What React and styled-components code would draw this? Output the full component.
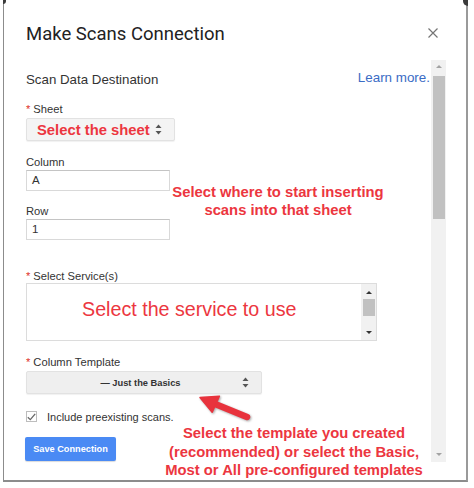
import React from "react";
import styled, { createGlobalStyle } from "styled-components";

const GlobalStyle = createGlobalStyle`
  html, body { margin: 0; padding: 0; background: #fff; }
  body { font-family: "Liberation Sans", Arial, sans-serif; color: #333; }
  * { box-sizing: border-box; }
`;

const RED = "#ec3640";

const Frame = styled.div`
  position: relative;
  margin-left: 3px;
  width: 465px;
  height: 482px;
  border-left: 1px solid #8c8c8c;
  border-right: 2px solid #9a9a9a;
  border-bottom: 2px solid #8c8c8c;
  display: flex;
  flex-direction: column;
  background: #fff;
`;

const Corner = styled.div`
  position: absolute;
  top: 0;
  ${(p) => (p.$side === "left" ? "left: -1px;" : "right: -2px;")}
  width: ${(p) => (p.$side === "left" ? 3 : 5)}px;
  height: ${(p) => (p.$side === "left" ? 4 : 6)}px;
  background: #3a3a3a;
  ${(p) =>
    p.$side === "left"
      ? "border-bottom-right-radius: 3px;"
      : "border-bottom-left-radius: 5px;"}
`;

const Header = styled.div`
  height: 60px;
  padding: 23px 28px 0 22px;
  display: flex;
  justify-content: space-between;
  align-items: flex-start;
`;

const Title = styled.h1`
  margin: 0;
  font-family: Roboto, "Liberation Sans", Arial, sans-serif;
  font-weight: 400;
  font-size: 18.5px;
  line-height: 22px;
  color: #222;
`;

const Close = styled.svg`
  margin-top: 5px;
  width: 10px;
  height: 10px;
`;

const Body = styled.div`
  flex: 1;
  display: flex;
  align-items: flex-start;
  padding-right: 20px;
`;

const Content = styled.div`
  flex: 1;
  padding: 0 1px 0 22px;
  display: flex;
  flex-direction: column;
`;

const TopRow = styled.div`
  margin-top: 10px;
  height: 15px;
  display: flex;
  justify-content: space-between;
  align-items: flex-start;
  line-height: 15px;
`;

const SectionTitle = styled.div`
  margin-top: 2px;
  font-size: 13.3px;
  color: #333;
`;

const LearnMore = styled.a`
  font-size: 13.4px;
  color: #3b6cc5;
  text-decoration: none;
`;

const Label = styled.div`
  margin-top: ${(p) => p.$mt}px;
  font-size: 11.2px;
  line-height: 13px;
  color: #333;
  white-space: nowrap;
`;

const Star = styled.span`
  color: #e0352d;
  margin-right: 3px;
`;

const Select = styled.div`
  margin-top: 2px;
  width: ${(p) => p.$w}px;
  height: 23px;
  background: ${(p) => p.$bg};
  border: 1px solid #e2e2e2;
  border-radius: 2px;
  box-shadow: 0 1px 1px rgba(0, 0, 0, 0.06);
  display: flex;
  align-items: center;
  padding: 0 12px 0 ${(p) => p.$pl}px;
`;

const SelectText = styled.span`
  flex: 1;
  text-align: ${(p) => (p.$center ? "center" : "left")};
  font-weight: 700;
  font-size: ${(p) => p.$size}px;
  color: ${(p) => p.$color};
  white-space: nowrap;
`;

const Updown = () => (
  <svg width="7" height="11" viewBox="0 0 7 11">
    <path d="M3.5 0.5 L6.5 4 L0.5 4 Z" fill="#555" />
    <path d="M3.5 10.5 L6.5 7 L0.5 7 Z" fill="#555" />
  </svg>
);

const FieldsRow = styled.div`
  margin-top: 15px;
  display: flex;
  align-items: flex-start;
`;

const FieldsCol = styled.div`
  width: 144px;
  display: flex;
  flex-direction: column;
`;

const Input = styled.div`
  margin-top: 1px;
  width: 144px;
  height: 21px;
  border: 1px solid #d9d9d9;
  border-top-color: #c4c4c4;
  padding-left: 5px;
  font-size: 11.5px;
  line-height: 19px;
  color: #333;
`;

const Note = styled.div`
  margin-top: ${(p) => p.$mt}px;
  width: ${(p) => p.$w}px;
  flex-shrink: 0;
  text-align: center;
  font-weight: 700;
  font-size: 14.8px;
  line-height: ${(p) => p.$lh}px;
  color: ${RED};
  white-space: nowrap;
`;

const ListBox = styled.div`
  width: 351px;
  height: 58px;
  border: 1px solid #dcdcdc;
  display: flex;
`;

const ListText = styled.div`
  flex: 1;
  padding: 14px 0 0 55px;
  font-size: 19.7px;
  line-height: 22px;
  color: ${RED};
  white-space: nowrap;
`;

const Track = styled.div`
  width: ${(p) => p.$w}px;
  height: ${(p) => p.$h}px;
  flex-shrink: 0;
  background: #f1f1f1;
  display: flex;
  flex-direction: column;
  align-items: center;
`;

const Arrow = styled.div`
  width: 0;
  height: 0;
  border-left: ${(p) => p.$s}px solid transparent;
  border-right: ${(p) => p.$s}px solid transparent;
  ${(p) =>
    p.$up
      ? `border-bottom: ${p.$s}px solid ${p.$c};`
      : `border-top: ${p.$s}px solid ${p.$c};`}
  margin-top: ${(p) => p.$mt}px;
`;

const Thumb = styled.div`
  margin-top: ${(p) => p.$mt}px;
  width: ${(p) => p.$w}px;
  height: ${(p) => p.$h}px;
  background: #c1c1c1;
`;

const Spacer = styled.div`
  flex: 1;
`;

const BottomRow = styled.div`
  position: relative;
  margin-top: 16px;
  display: flex;
  align-items: flex-start;
`;

const BottomLeft = styled.div`
  width: 133px;
  flex-shrink: 0;
  display: flex;
  flex-direction: column;
`;

const CheckRow = styled.label`
  display: flex;
  align-items: center;
  height: 13px;
  white-space: nowrap;
  font-size: 11px;
  color: #333;
`;

const Box = styled.span`
  width: 11px;
  height: 11px;
  border: 1px solid #bdbdbd;
  margin-right: 10px;
  display: inline-flex;
  align-items: center;
  justify-content: center;
`;

const Button = styled.button`
  margin-top: 14px;
  width: 91px;
  height: 24px;
  margin-left: -1px;
  border: none;
  border-radius: 2px;
  background: #4a8af4;
  color: #fff;
  font-family: "Liberation Sans", Arial, sans-serif;
  font-weight: 700;
  font-size: 9.2px;
  padding: 0;
  box-shadow: 0 1px 1px rgba(0, 0, 0, 0.15);
`;

const PointerArrow = styled.svg`
  position: absolute;
  left: 170px;
  top: -18px;
  filter: drop-shadow(1px 1.5px 1px rgba(0, 0, 0, 0.35));
`;

export default function App() {
  return (
    <>
      <GlobalStyle />
      <Frame>
        <Corner $side="left" />
        <Corner $side="right" />
        <Header>
          <Title>Make Scans Connection</Title>
          <Close viewBox="0 0 10 10">
            <path d="M0.5 0.5 L9.5 9.5 M9.5 0.5 L0.5 9.5" stroke="#757575" strokeWidth="1.2" />
          </Close>
        </Header>
        <Body>
          <Content>
            <TopRow>
              <SectionTitle>Scan Data Destination</SectionTitle>
              <LearnMore href="#">Learn more.</LearnMore>
            </TopRow>

            <Label $mt={18}>
              <Star>*</Star>Sheet
            </Label>
            <Select $w={149} $bg="#f4f4f4" $pl={10}>
              <SelectText $size={14.8} $color={RED}>Select the sheet</SelectText>
              <Updown />
            </Select>

            <FieldsRow>
              <FieldsCol>
                <Label $mt={0}>Column</Label>
                <Input>A</Input>
                <Label $mt={14}>Row</Label>
                <Input>1</Input>
              </FieldsCol>
              <Note $mt={27} $w={216} $lh={18}>
                Select where to start inserting
                <br />
                scans into that sheet
              </Note>
            </FieldsRow>

            <Label $mt={30}>
              <Star>*</Star>Select Service(s)
            </Label>
            <ListBox>
              <ListText>Select the service to use</ListText>
              <Track $w={15} $h={56}>
                <Arrow $up $s={3.5} $c="#333" $mt={7} />
                <Thumb $mt={5} $w={12} $h={17} />
                <Spacer />
                <Arrow $s={3.5} $c="#333" $mt={0} />
                <Thumb $mt={6} $w={0} $h={0} />
              </Track>
            </ListBox>

            <Label $mt={15}>
              <Star>*</Star>Column Template
            </Label>
            <Select $w={236} $bg="#efefef" $pl={12}>
              <SelectText $center $size={9.3} $color="#333">— Just the Basics</SelectText>
              <Updown />
            </Select>

            <BottomRow>
              <BottomLeft>
                <CheckRow>
                  <Box>
                    <svg width="9" height="8" viewBox="0 0 9 8">
                      <path d="M0.8 4.2 L3.3 6.6 L8.2 0.8" fill="none" stroke="#666" strokeWidth="1.3" />
                    </svg>
                  </Box>
                  Include preexisting scans.
                </CheckRow>
                <Button>Save Connection</Button>
              </BottomLeft>
              <Note $mt={14} $w={270} $lh={18.5}>
                Select the template you created
                <br />
                (recommended) or select the Basic,
                <br />
                Most or All pre-configured templates
              </Note>
              <PointerArrow width="60" height="32" viewBox="0 0 60 32">
                <path d="M19.8 12.2 L51 25" stroke="#e8333d" strokeWidth="6.5" strokeLinecap="round" />
                <path d="M4 5.5 L16.2 20.2 L23.4 4.2 Z" fill="#e8333d" stroke="#e8333d" strokeWidth="1.5" strokeLinejoin="round" />
              </PointerArrow>
            </BottomRow>
          </Content>
          <Track $w={15} $h={402}>
            <Arrow $up $s={3} $c="#a3a3a3" $mt={5} />
            <Thumb $mt={8} $w={12} $h={143} />
            <Spacer />
            <Arrow $s={3} $c="#a3a3a3" $mt={0} />
            <Thumb $mt={6} $w={0} $h={0} />
          </Track>
        </Body>
      </Frame>
    </>
  );
}
